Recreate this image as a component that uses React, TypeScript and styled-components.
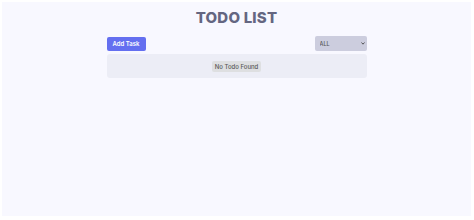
import React from "react";
import styled, { createGlobalStyle } from "styled-components";

const Global = createGlobalStyle`
  html, body { margin: 0; padding: 0; background: #ffffff; }
  body { font-family: "Inter", "Lato", "Liberation Sans", sans-serif; }
  * { box-sizing: border-box; }
`;

const Page = styled.div`
  margin: 2px 3px 4px 2px;
  height: 214px;
  background: #f8f8ff;
  display: flex;
  flex-direction: column;
  align-items: center;
`;

const Title = styled.h1`
  margin: 7px 0 0;
  font-size: 15px;
  line-height: 18px;
  font-weight: 800;
  color: #646681;
  letter-spacing: 0.2px;
`;

const Wrapper = styled.div`
  width: 260px;
  margin-top: 9px;
  display: flex;
  flex-direction: column;
  gap: 3px;
`;

const Toolbar = styled.div`
  display: flex;
  justify-content: space-between;
  align-items: center;
`;

const AddButton = styled.button`
  height: 14px;
  width: 39px;
  padding: 0;
  border: none;
  border-radius: 2px;
  background: #646ff0;
  color: #ffffff;
  font-family: inherit;
  font-size: 6px;
  font-weight: 600;
  cursor: pointer;
`;

const SelectWrap = styled.div`
  position: relative;
  width: 52px;
  height: 15px;
`;

const Select = styled.select`
  appearance: none;
  -webkit-appearance: none;
  display: block;
  width: 100%;
  height: 100%;
  margin: 0;
  padding: 0 8px 0 5px;
  border: none;
  border-radius: 2px;
  background: #cccdde;
  color: #585858;
  font-family: inherit;
  font-size: 5.5px;
  font-weight: 500;
  outline: none;
`;

const Chevron = styled.svg`
  position: absolute;
  right: 2px;
  top: 6px;
  width: 4px;
  height: 3px;
  display: block;
  pointer-events: none;
`;

const Panel = styled.div`
  height: 24px;
  border-radius: 3px;
  background: #ecedf6;
  display: flex;
  align-items: center;
  justify-content: center;
`;

const Empty = styled.p`
  margin: 0;
  padding: 2px 3px;
  border-radius: 2px;
  background: #dedfe1;
  color: #585858;
  font-size: 6px;
  font-weight: 500;
  line-height: 7px;
`;

export default function App() {
  return (
    <>
      <Global />
      <Page>
        <Title>TODO LIST</Title>
        <Wrapper>
          <Toolbar>
            <AddButton>Add Task</AddButton>
            <SelectWrap>
              <Select defaultValue="all">
                <option value="all">ALL</option>
                <option value="incomplete">Incomplete</option>
                <option value="complete">Completed</option>
              </Select>
              <Chevron viewBox="0 0 4 3">
                <path d="M0.5 0.5 L2 2.2 L3.5 0.5" fill="none" stroke="#444" strokeWidth="0.9" />
              </Chevron>
            </SelectWrap>
          </Toolbar>
          <Panel>
            <Empty>No Todo Found</Empty>
          </Panel>
        </Wrapper>
      </Page>
    </>
  );
}
